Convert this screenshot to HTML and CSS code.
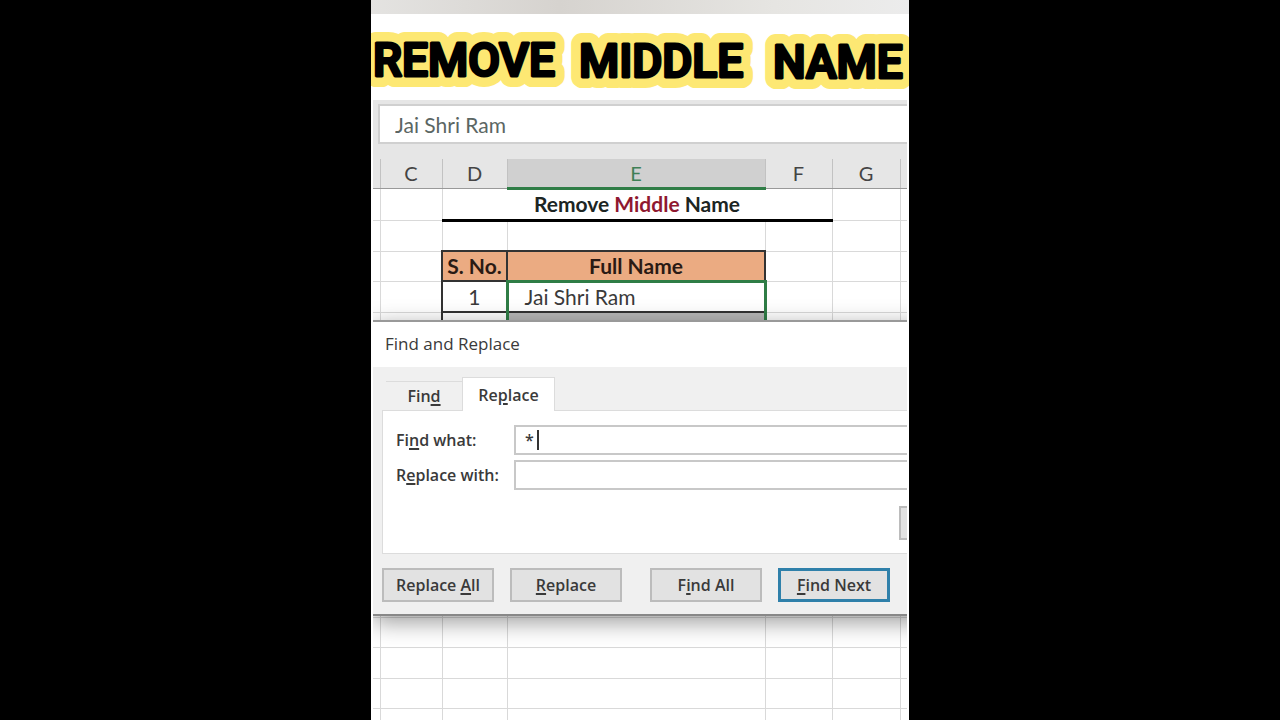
FILE: index.html
```html
<!DOCTYPE html>
<html lang="en">
<head>
  <meta charset="UTF-8" />
  <meta name="viewport" content="width=device-width, initial-scale=1" />
  <title>Remove Middle Name</title>
  <link rel="stylesheet" href="styles.css">
</head>
<body>
  <main class="stage">
    <div class="top-strip"></div>
    <h1 class="banner">
      <svg viewBox="0 0 538 86">
        <use class="halo" href="#words" />
        <g class="ink">
          <g id="words">
            <text x="2" y="62">REMOVE</text>
            <text x="208" y="63">MIDDLE</text>
            <text x="402" y="64">NAME</text>
          </g>
        </g>
      </svg>
    </h1>

    <div class="formula-bar">
      <input type="text" aria-label="Formula bar" value="Jai Shri Ram" />
    </div>

    <div class="sheet">
      <table aria-label="Names">
        <colgroup>
          <col class="col-edge"><col class="col-c"><col class="col-d"><col><col class="col-f"><col class="col-g"><col class="col-edge">
        </colgroup>
        <thead>
          <tr><th></th><th>C</th><th>D</th><th class="active">E</th><th>F</th><th>G</th><th></th></tr>
        </thead>
        <tbody>
          <tr class="title-row"><td></td><td></td><td colspan="3" class="title">Remove <span>Middle</span> Name</td><td></td><td></td></tr>
          <tr><td></td><td></td><td></td><td></td><td></td><td></td><td></td></tr>
          <tr><td></td><td></td><td class="head">S. No.</td><td class="head">Full Name</td><td></td><td></td><td></td></tr>
          <tr><td></td><td></td><td class="num">1</td><td class="name">Jai Shri Ram</td><td></td><td></td><td></td></tr>
          <tr><td></td><td></td><td class="num"></td><td class="name picked"></td><td></td><td></td><td></td></tr>
          <tr><td></td><td></td><td></td><td></td><td></td><td></td><td></td></tr>
          <tr><td></td><td></td><td></td><td></td><td></td><td></td><td></td></tr>
          <tr><td></td><td></td><td></td><td></td><td></td><td></td><td></td></tr>
          <tr><td></td><td></td><td></td><td></td><td></td><td></td><td></td></tr>
          <tr><td></td><td></td><td></td><td></td><td></td><td></td><td></td></tr>
          <tr><td></td><td></td><td></td><td></td><td></td><td></td><td></td></tr>
          <tr><td></td><td></td><td></td><td></td><td></td><td></td><td></td></tr>
          <tr><td></td><td></td><td></td><td></td><td></td><td></td><td></td></tr>
          <tr><td></td><td></td><td></td><td></td><td></td><td></td><td></td></tr>
          <tr><td></td><td></td><td></td><td></td><td></td><td></td><td></td></tr>
          <tr><td></td><td></td><td></td><td></td><td></td><td></td><td></td></tr>
          <tr><td></td><td></td><td></td><td></td><td></td><td></td><td></td></tr>
          <tr><td></td><td></td><td></td><td></td><td></td><td></td><td></td></tr>
        </tbody>
      </table>

      <section class="dialog" role="dialog" aria-labelledby="dialog-title">
        <h2 id="dialog-title">Find and Replace</h2>
        <div class="tabs">
          <button type="button" class="tab">Fin<u>d</u></button>
          <button type="button" class="tab current">Re<u>p</u>lace</button>
        </div>
        <div class="panel">
          <div class="field">
            <label for="find">Fi<u>n</u>d what:</label>
            <div class="box"><input type="text" id="find" value="*" /><i class="caret"></i></div>
          </div>
          <div class="field">
            <label for="replace">R<u>e</u>place with:</label>
            <div class="box"><input type="text" id="replace" /></div>
          </div>
          <button type="button" class="btn options" aria-label="Options"></button>
        </div>
        <div class="actions">
          <button type="button" class="btn">Replace <u>A</u>ll</button>
          <button type="button" class="btn"><u>R</u>eplace</button>
          <button type="button" class="btn find-all">F<u>i</u>nd All</button>
          <button type="button" class="btn default"><u>F</u>ind Next</button>
        </div>
      </section>
    </div>
  </main>
</body>
</html>
```
FILE: styles.css
```css
:root {
  --chrome: #e6e6e6;
  --grid: #d9d9d9;
  --line: #333333;
  --green: #2f7d46;
  --halo: #fde873;
}
* { box-sizing: border-box; }
body {
  margin: 0;
  background-color: #000;
  font-family: "Open Sans", "Noto Sans", sans-serif;
  color: #3a3a3a;
}
.stage {
  max-width: 538px;
  height: 100vh;
  margin: 0 auto;
  padding: 0 2px;
  background-color: #fff;
  overflow: hidden;
  display: flex;
  flex-direction: column;
}
.top-strip {
  flex: none;
  height: 14px;
  margin: 0 -2px;
  background: linear-gradient(90deg, #e4e3e1, #d6d3cf 35%, #e6e5e2 75%, #ececec);
}
.banner {
  flex: none;
  margin: 0 -2px;
  font-family: "Roboto", sans-serif;
  font-size: 46px;
  font-weight: 500;
}
.banner svg {
  display: block;
  width: 100%;
}
.halo, .ink {
  stroke-linejoin: round;
  stroke-linecap: round;
}
.halo {
  fill: var(--halo);
  stroke: var(--halo);
  stroke-width: 22px;
}
.ink {
  fill: #000;
  stroke: #000;
  stroke-width: 3px;
}
.formula-bar {
  flex: none;
  padding: 4px 0 15px 5px;
  background-color: var(--chrome);
}
.formula-bar input {
  display: block;
  width: 100%;
  height: 40px;
  padding: 0 15px;
  border: 2px solid #d0d0d0;
  border-right: 0;
  background-color: #fff;
  font-family: "Lato", sans-serif;
  font-size: 21px;
  color: #5b6663;
}
.sheet {
  position: relative;
  flex: 1;
  overflow: hidden;
}

/* worksheet grid */
table {
  width: 100%;
  table-layout: fixed;
  border-collapse: collapse;
  font-family: "Lato", sans-serif;
  font-size: 21px;
  line-height: 24px;
}
.col-edge { width: 7px; }
.col-c { width: 62px; }
.col-d { width: 65px; }
.col-f { width: 67px; }
.col-g { width: 68px; }
th, td {
  height: 31px;
  padding: 0;
  border: 1px solid var(--grid);
  text-align: center;
  white-space: nowrap;
}
tbody tr:nth-child(odd) td { height: 30px; }
tbody .title-row:nth-child(odd) td { height: 32px; }
tr > :first-child { border-left: 0; }
tr > :last-child { border-right: 0; }
th {
  height: 29px;
  background-color: var(--chrome);
  border-top: 0;
  border-color: #c2c2c2;
  border-bottom: 1px solid #999;
  font-size: 20px;
  font-weight: 400;
  color: #444;
}
th.active {
  background-color: #d0d0d0;
  border-bottom: 3px solid var(--green);
  color: #3f8056;
}
.title {
  border-bottom: 3px solid #000;
  font-weight: 700;
  color: #1c2523;
}
.title span { color: #8f1830; }
.head {
  background-color: #ebab82;
  border: 2px solid var(--line);
  font-weight: 700;
  color: #2a1a14;
}
.num { border: 2px solid var(--line); }
.name {
  border: 3px solid var(--green);
  border-bottom: 2px solid var(--line);
  padding-left: 16px;
  text-align: left;
}
.picked {
  background-color: #b8b8b8;
  border-top: 2px solid var(--line);
}

/* find and replace window, runs past the right edge */
.dialog {
  position: absolute;
  top: 161px;
  left: 0;
  right: -120px;
  border-top: 2px solid #999;
  border-bottom: 2px solid #888;
  background-color: #f0f0f0;
  box-shadow: 0 6px 22px rgba(0, 0, 0, 0.4);
  font-size: 16px;
  line-height: 24px;
}
.dialog h2 {
  margin: 0;
  padding: 10px 12px 11px;
  background-color: #fff;
  font-size: 17px;
  line-height: 24px;
  font-weight: 400;
}
.dialog u {
  text-decoration-thickness: 2px;
  text-underline-offset: 2px;
}
.tabs {
  display: flex;
  align-items: flex-end;
  padding: 10px 13px 0;
}
.tab {
  height: 29px;
  width: 76px;
  padding: 0;
  border: 1px solid #dcdcdc;
  border-width: 1px 0 0;
  background-color: #f0f0f0;
  font: inherit;
  font-weight: 600;
  color: inherit;
}
.tab.current {
  position: relative;
  height: 34px;
  width: 93px;
  margin-bottom: -1px;
  border-width: 1px 1px 0;
  background-color: #fff;
}
.panel {
  display: flex;
  flex-direction: column;
  gap: 5px;
  height: 144px;
  margin-left: 9px;
  padding: 14px 15px 0 13px;
  border: 1px solid #dcdcdc;
  background-color: #fff;
  font-weight: 600;
}
.field {
  display: flex;
  align-items: center;
}
.field label { width: 118px; }
.box {
  position: relative;
  flex: 1;
}
.box input {
  display: block;
  width: 100%;
  height: 30px;
  padding: 0 9px;
  border: 2px solid #c8c8c8;
  background-color: #fff;
  font: inherit;
  color: inherit;
}
.caret {
  position: absolute;
  top: 5px;
  left: 23px;
  width: 2px;
  height: 20px;
  background-color: #333;
}
.btn {
  width: 112px;
  height: 34px;
  padding: 0;
  border: 2px solid #bcbcbc;
  background-color: #e2e2e2;
  font: inherit;
  font-weight: 600;
  color: inherit;
}
.options {
  align-self: flex-end;
  margin-top: 11px;
}
.actions {
  display: flex;
  gap: 16px;
  padding: 14px 9px 12px;
}
.find-all { margin-left: 12px; }
.default { border: 3px solid #2f80aa; }
```
